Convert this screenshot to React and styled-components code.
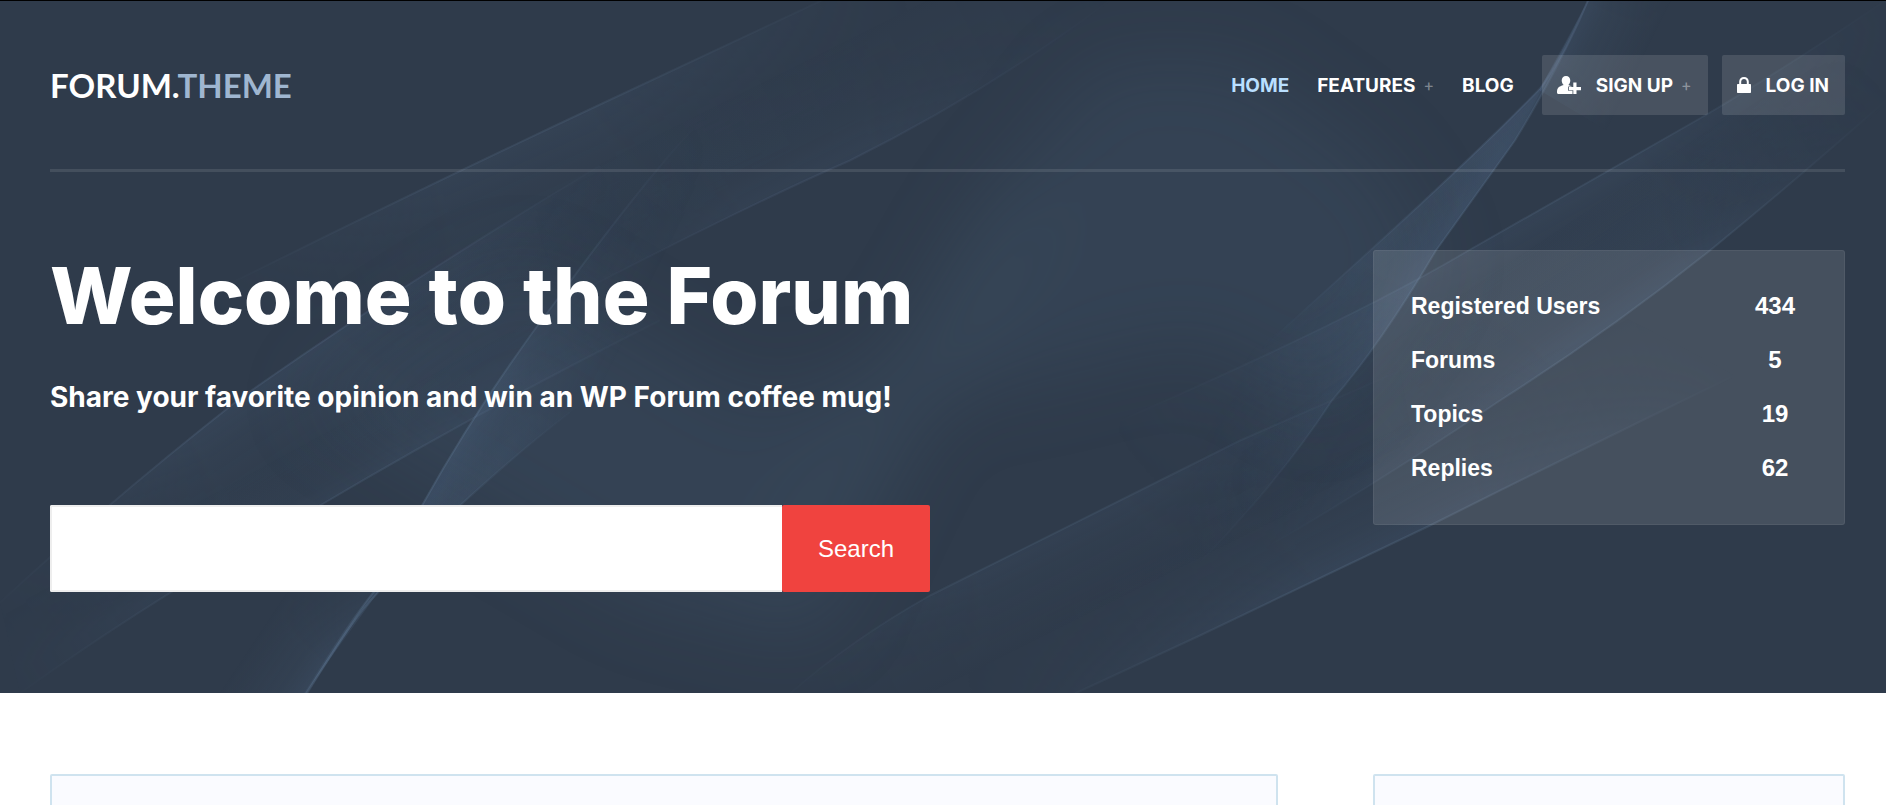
import React from 'react';
import styled, { createGlobalStyle } from 'styled-components';

const GlobalStyle = createGlobalStyle`
    *,
    *::before,
    *::after {
        box-sizing: border-box;
    }

    body {
        margin: 0;
        background: #fff;
        color: #fff;
        font-family: 'Liberation Sans', Arial, sans-serif;
    }
`;

const Hero = styled.header`
    position: relative;
    overflow: hidden;
    padding: 54px 41px 101px 50px;
    border-top: 1px solid #000;
    background: #2f3b4b;
`;

const Backdrop = styled.svg`
    position: absolute;
    inset: 0;
    width: 100%;
    height: 100%;
`;

const TopBar = styled.div`
    position: relative;
    display: flex;
    align-items: center;
    justify-content: space-between;
    padding-bottom: 54px;
    border-bottom: 3px solid rgba(255, 255, 255, 0.1);
`;

const Logo = styled.a`
    color: #fff;
    font-family: Lato, sans-serif;
    font-size: 33px;
    font-weight: 700;
    line-height: 60px;
    text-decoration: none;
`;

const LogoAccent = styled.span`
    color: #9fb6d0;
`;

const Nav = styled.nav`
    display: flex;
    align-items: center;
    gap: 28px;
`;

const NavButtons = styled.div`
    display: flex;
    gap: 14px;
`;

const NavLink = styled.a`
    display: flex;
    align-items: center;
    height: 60px;
    color: ${(props) => (props.$active ? '#b9dfff' : '#fff')};
    font-family: Inter, sans-serif;
    font-size: 19px;
    font-weight: 700;
    text-decoration: none;
    white-space: nowrap;
`;

const NavButton = styled(NavLink)`
    padding: 0 16px 0 15px;
    border-radius: 2px;
    background: rgba(255, 255, 255, 0.12);

    svg {
        margin-right: 15px;
        fill: currentColor;
    }
`;

const Plus = styled.span`
    margin-left: 8px;
    color: rgba(255, 255, 255, 0.4);
    font-size: 16px;
    font-weight: 400;
`;

const Columns = styled.div`
    position: relative;
    display: grid;
    grid-template-columns: minmax(0, 1228fr) minmax(0, 472fr);
    gap: 95px;
    align-items: start;
`;

const HeroColumns = styled(Columns)`
    padding-top: 78px;
`;

const Title = styled.h1`
    margin: 0;
    font-family: Inter, sans-serif;
    font-size: 78px;
    font-weight: 800;
    line-height: 92px;
`;

const Subtitle = styled.h2`
    margin: 37px 0 0;
    font-family: Inter, sans-serif;
    font-size: 28px;
    font-weight: 700;
    line-height: 36px;
`;

const SearchForm = styled.form`
    display: flex;
    max-width: 880px;
    height: 87px;
    margin-top: 90px;
`;

const SearchInput = styled.input`
    flex: 1;
    min-width: 0;
    padding: 0 24px;
    border: 2px solid #eee;
    border-right: 0;
    border-radius: 2px 0 0 2px;
    background: #fff;
    font: inherit;
    font-size: 24px;
`;

const SearchButton = styled.button`
    width: 148px;
    border: 0;
    border-radius: 2px;
    background: #f0433f;
    color: #fff;
    font: inherit;
    font-size: 24px;
    cursor: pointer;
`;

const StatsPanel = styled.section`
    padding: 28px 37px 29px;
    border: 1px solid rgba(255, 255, 255, 0.06);
    border-radius: 3px;
    background: rgba(255, 255, 255, 0.11);
`;

const StatsTable = styled.table`
    width: 100%;
    border-collapse: collapse;
    line-height: 54px;

    th,
    td {
        padding: 0;
        font-weight: 700;
    }

    th {
        font-size: 23px;
        text-align: left;
    }

    td {
        width: 64px;
        font-size: 24px;
        text-align: center;
    }
`;

const Main = styled.main`
    padding: 81px 41px 0 50px;
`;

const Card = styled.section`
    min-height: 240px;
    border: 2px solid #cfe3ef;
    border-radius: 2px;
    background: #fafbff;
`;

const stats = [
    { label: 'Registered Users', value: 434 },
    { label: 'Forums', value: 5 },
    { label: 'Topics', value: 19 },
    { label: 'Replies', value: 62 },
];

// d is the bright edge and close shuts the band; from/to is the direction the light
// falls off in, start/end the line along which the band fades in and out
const ribbons = [
    {
        id: 'a',
        d: 'M180 308 Q400 198 600 104 T830 -4',
        close: 'L1100 -4 L960 180 L600 340 Z',
        from: [600, 104],
        to: [660, 240],
        start: [200, 300],
        end: [900, -30],
        fill: 0.3,
        line: 0.8,
    },
    {
        id: 'b',
        d: 'M0 602 Q110 500 240 398 Q400 285 600 165',
        close: 'L800 300 L320 605 L20 693 Z',
        from: [300, 355],
        to: [370, 460],
        start: [-20, 620],
        end: [640, 140],
        fill: 0.4,
        line: 0.9,
    },
    {
        id: 'c',
        d: 'M20 693 Q160 592 320 505 Q480 410 660 320',
        close: 'L560 170 L240 398 L0 602 Z',
        from: [320, 505],
        to: [290, 450],
        start: [0, 700],
        end: [720, 280],
        fill: 0.3,
        line: 0.8,
    },
    {
        id: 'd',
        d: 'M560 302 Q740 208 850 160 Q990 90 1110 0',
        close: 'L820 0 L500 104 Z',
        from: [850, 160],
        to: [800, 60],
        start: [540, 300],
        end: [1120, 0],
        fill: 0.25,
        line: 0.6,
    },
    {
        id: 'e',
        d: 'M305 693 Q350 620 375 590 L422 505 Q480 400 560 295 Q640 185 700 120',
        close: 'L860 230 L570 412 Q520 450 460 505 L378 592 Z',
        from: [490, 385],
        to: [580, 430],
        start: [260, 780],
        end: [690, 110],
        fill: 0.6,
        line: 1.2,
    },
    {
        id: 'f',
        d: 'M300 705 Q350 620 378 592 Q420 540 460 505 Q520 450 570 412',
        close: 'L500 385 L422 505 L375 590 Z',
        from: [460, 505],
        to: [430, 480],
        start: [240, 780],
        end: [590, 390],
        fill: 0.35,
        line: 1,
    },
    {
        id: 'tail',
        d: 'M306 693 Q340 640 378 585',
        close: 'L300 540 L180 693 Z',
        from: [340, 640],
        to: [280, 600],
        start: [220, 820],
        end: [410, 540],
        fill: 0.45,
        line: 1,
    },
    {
        id: 'g',
        d: 'M1588 0 Q1560 66 1515 140 L1436 250 Q1380 345 1332 400 Q1280 480 1200 562',
        close: 'L1060 480 L1280 330 L1370 250 Q1480 150 1540 88 Z',
        from: [1436, 250],
        to: [1350, 195],
        start: [1640, -100],
        end: [1190, 575],
        fill: 0.7,
        line: 1,
    },
    {
        id: 'g-edge',
        d: 'M1588 0 Q1560 60 1540 88 Q1480 150 1370 250 L1260 350',
        close: 'L1436 250 L1515 140 Z',
        from: [1455, 170],
        to: [1485, 200],
        start: [1640, -100],
        end: [1260, 350],
        fill: 0.3,
        line: 0.9,
    },
    {
        id: 'g-tail',
        d: 'M1588 0 Q1570 45 1540 90',
        close: 'L1640 150 L1740 0 Z',
        from: [1560, 50],
        to: [1630, 85],
        start: [1640, -90],
        end: [1490, 180],
        fill: 0.5,
        line: 0.6,
    },
    {
        id: 'h',
        d: 'M1885 0 Q1790 65 1705 115 L1465 252 Q1350 320 1120 420',
        close: 'L1100 600 L1375 520 L1500 400 L1710 250 L1886 105 Z',
        from: [1465, 252],
        to: [1520, 350],
        start: [1900, -10],
        end: [1110, 430],
        fill: 0.32,
        line: 0.8,
    },
    {
        id: 'i',
        d: 'M1886 100 Q1805 172 1710 250 Q1610 330 1500 400 Q1390 475 1270 545',
        close: 'L1120 420 L1465 252 L1705 115 L1885 0 Z',
        from: [1600, 330],
        to: [1540, 240],
        start: [1890, 90],
        end: [1260, 550],
        fill: 0.5,
        line: 1,
    },
    {
        id: 'j',
        d: 'M1735 375 Q1600 440 1430 525 L1200 635 L1075 693',
        close: 'L800 693 L1200 400 L1500 250 Z',
        from: [1300, 587],
        to: [1255, 495],
        start: [1740, 370],
        end: [980, 740],
        fill: 0.4,
        line: 1,
    },
    {
        id: 'k',
        d: 'M790 693 Q850 640 930 595 L1240 440 L1400 370',
        close: 'L1430 525 L1200 635 L1075 693 Z',
        from: [1100, 510],
        to: [1140, 590],
        start: [760, 710],
        end: [1420, 360],
        fill: 0.25,
        line: 0.7,
    },
];

const Ribbon = ({ id, d, close, from, to, start, end, fill, line }) => (
    <g mask={`url(#ribbon-mask-${id})`}>
        <linearGradient
            id={`ribbon-${id}`}
            gradientUnits="userSpaceOnUse"
            x1={from[0]}
            y1={from[1]}
            x2={to[0]}
            y2={to[1]}
        >
            <stop offset="0" stopColor="#5f7da3" stopOpacity={fill * 0.36} />
            <stop offset="0.3" stopColor="#5c7896" stopOpacity={fill * 0.2} />
            <stop offset="1" stopColor="#5c7896" stopOpacity="0" />
        </linearGradient>
        <linearGradient
            id={`ribbon-ends-${id}`}
            gradientUnits="userSpaceOnUse"
            x1={start[0]}
            y1={start[1]}
            x2={end[0]}
            y2={end[1]}
        >
            <stop offset="0" stopColor="#000" />
            <stop offset="0.35" stopColor="#fff" />
            <stop offset="0.55" stopColor="#fff" />
            <stop offset="1" stopColor="#000" />
        </linearGradient>
        <mask
            id={`ribbon-mask-${id}`}
            maskUnits="userSpaceOnUse"
            x="-100"
            y="-100"
            width="2086"
            height="893"
        >
            <rect x="-100" y="-100" width="2086" height="893" fill={`url(#ribbon-ends-${id})`} />
        </mask>
        <path d={`${d} ${close}`} fill={`url(#ribbon-${id})`} />
        <path d={d} fill="none" stroke="#7f9abb" strokeWidth="2" strokeOpacity={line * 0.16} />
    </g>
);

const HeroBackdrop = () => (
    <Backdrop viewBox="0 0 1886 693" preserveAspectRatio="xMidYMid slice" aria-hidden="true">
        <defs>
            <filter
                id="haze"
                x="-50%"
                y="-50%"
                width="200%"
                height="200%"
                colorInterpolationFilters="sRGB"
            >
                <feGaussianBlur stdDeviation="40" />
            </filter>
            <filter
                id="soft"
                x="-5%"
                y="-5%"
                width="110%"
                height="110%"
                colorInterpolationFilters="sRGB"
            >
                <feGaussianBlur stdDeviation="0.7" />
            </filter>
        </defs>
        <g filter="url(#haze)">
            <path
                d="M1120 60 Q1010 160 980 280 Q940 390 890 480 L820 640 L640 600 L300 400 L520 260 L760 400 L900 360 L990 200 Z"
                fill="#57718e"
                opacity="0.14"
            />
            <path
                d="M1100 60 L1020 160 L960 320 L920 400 L1040 380 L1200 340 L1330 420 L1440 260 L1380 160 L1240 60 Z"
                fill="#57718e"
                opacity="0.14"
            />
            <path
                d="M1060 180 L980 320 L880 470 L800 600 L760 590 L860 420 L980 220 Z"
                fill="#57718e"
                opacity="0.1"
            />
        </g>
        <g filter="url(#soft)">
            {ribbons.map((ribbon) => (
                <Ribbon key={ribbon.id} {...ribbon} />
            ))}
        </g>
    </Backdrop>
);

const UserPlusIcon = () => (
    <svg width="24" height="18" viewBox="0 0 24 18" aria-hidden="true">
        <path d="M9 0c2.600 0 4.300 1.900 4.300 4.500 0 1.900-.8 3.500-2 4.500 1.500.5 2.700.9 3.700 1.500H11.200v4.300h4.300V18H1.500C.6 18 0 17.400 0 16.500c0-4.600 1.600-5.900 6.700-7.500-1.200-1-2-2.600-2-4.500C4.700 1.900 6.400 0 9 0z" />
        <path d="M16.300 6.500h3.200v4.600H24v3.100h-4.500V18h-3.200v-3.800H12v-3.100h4.300z" />
    </svg>
);

const LockIcon = () => (
    <svg width="14" height="16" viewBox="0 0 14 16" aria-hidden="true">
        <path d="M7 0C4.200 0 2.200 2 2.200 4.800V7H1c-.6 0-1 .4-1 1v7c0 .6.4 1 1 1h12c.6 0 1-.4 1-1V8c0-.6-.4-1-1-1h-1.200V4.800C11.800 2 9.800 0 7 0zm0 1.900c1.700 0 2.800 1.200 2.800 2.900V7H4.200V4.800c0-1.700 1.100-2.900 2.800-2.900z" />
    </svg>
);

const App = () => (
    <>
        <GlobalStyle />
        <Hero>
            <HeroBackdrop />
            <TopBar>
                <Logo href="#home">
                    FORUM.<LogoAccent>THEME</LogoAccent>
                </Logo>
                <Nav>
                    <NavLink href="#home" $active>
                        HOME
                    </NavLink>
                    <NavLink href="#features">
                        FEATURES <Plus>+</Plus>
                    </NavLink>
                    <NavLink href="#blog">BLOG</NavLink>
                    <NavButtons>
                        <NavButton href="#signup">
                            <UserPlusIcon />
                            SIGN UP <Plus>+</Plus>
                        </NavButton>
                        <NavButton href="#login">
                            <LockIcon />
                            LOG IN
                        </NavButton>
                    </NavButtons>
                </Nav>
            </TopBar>
            <HeroColumns>
                <div>
                    <Title>Welcome to the Forum</Title>
                    <Subtitle>Share your favorite opinion and win an WP Forum coffee mug!</Subtitle>
                    <SearchForm role="search" onSubmit={(e) => e.preventDefault()}>
                        <SearchInput type="text" name="search" aria-label="Search the forum" />
                        <SearchButton type="submit">Search</SearchButton>
                    </SearchForm>
                </div>
                <StatsPanel>
                    <StatsTable>
                        <tbody>
                            {stats.map((stat) => (
                                <tr key={stat.label}>
                                    <th scope="row">{stat.label}</th>
                                    <td>{stat.value}</td>
                                </tr>
                            ))}
                        </tbody>
                    </StatsTable>
                </StatsPanel>
            </HeroColumns>
        </Hero>
        <Main>
            <Columns>
                <Card />
                <Card />
            </Columns>
        </Main>
    </>
);

export default App;
